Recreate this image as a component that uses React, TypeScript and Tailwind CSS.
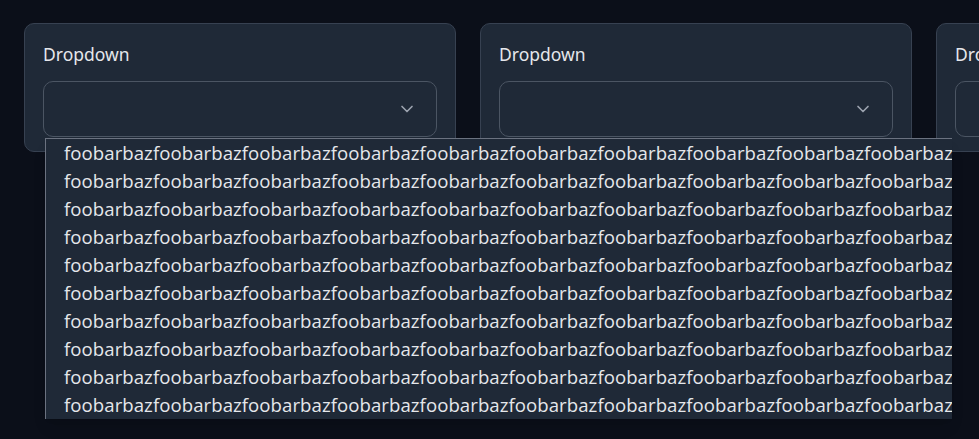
import { ChevronDown } from "lucide-react";

const rows = Array.from({ length: 10 }, (_, i) => i);
const text = "foobarbaz".repeat(14);

function DropdownBlock() {
  return (
    <div className="w-[432px] shrink-0 rounded-[10px] border border-[#374151] bg-[#1f2937] px-[18px] pt-[17px] pb-[14px]">
      <div className="text-[17.5px] leading-[26px] text-[#e5e7eb] [font-family:'Noto_Sans',sans-serif]">
        Dropdown
      </div>
      <div className="mt-[14px] flex h-[56px] items-center justify-end rounded-[10px] border border-[#4b5563] bg-[#1f2937] pr-[19px]">
        <ChevronDown className="h-[20px] w-[20px] text-[#9ca3af]" strokeWidth={2} />
      </div>
    </div>
  );
}

export default function App() {
  return (
    <div className="relative h-[439px] w-[979px] overflow-hidden bg-[#0b0f19]">
      <div className="flex gap-[24px] pl-[24px] pt-[23px]">
        <DropdownBlock />
        <DropdownBlock />
        <DropdownBlock />
      </div>

      {/* open options list */}
      <ul className="absolute left-[45px] top-[138px] w-[907px] overflow-hidden border-l border-t border-[#6b7280] bg-[#1f2937] shadow-lg">
        {rows.map((r) => (
          <li
            key={r}
            className="h-[28px] whitespace-nowrap pl-[18px] text-[18.6px] tracking-[0.06px] leading-[28px] text-[#e5e7eb] [font-family:'Open_Sans',sans-serif]"
          >
            {text}
          </li>
        ))}
      </ul>
    </div>
  );
}
